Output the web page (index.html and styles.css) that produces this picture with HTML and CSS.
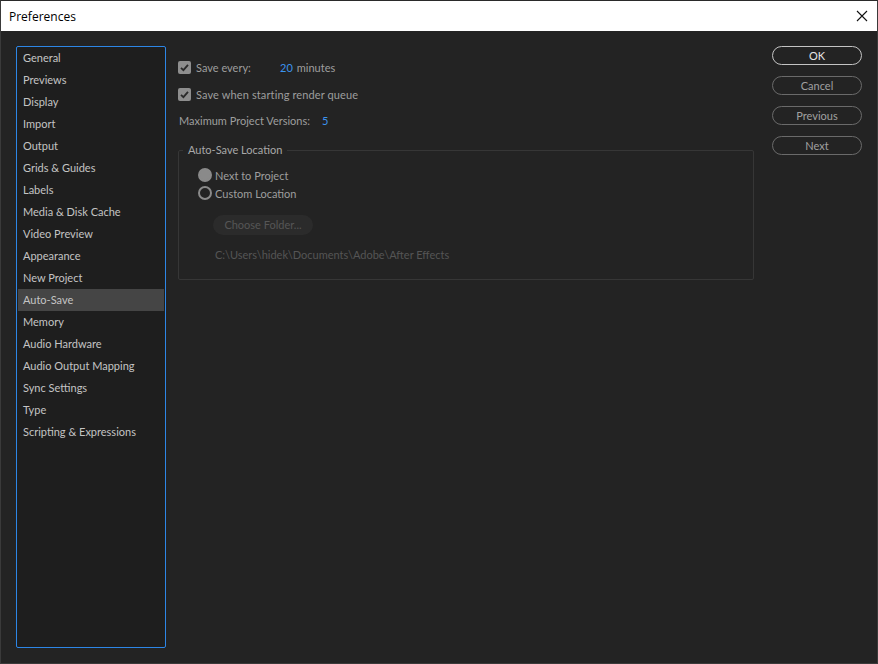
FILE: index.html
```html
<!DOCTYPE html>
<html>
<head>
<meta charset="utf-8">
<link rel="stylesheet" href="styles.css">
</head>
<body>
<div class="window">
  <div class="titlebar">
    <span class="title">Preferences</span>
    <svg class="close" width="12" height="12" viewBox="0 0 12 12"><path d="M1 1L11 11M11 1L1 11" stroke="#111" stroke-width="1.1" fill="none"/></svg>
  </div>
  <div class="content">
    <ul class="nav">
      <li>General</li>
      <li>Previews</li>
      <li>Display</li>
      <li>Import</li>
      <li>Output</li>
      <li>Grids &amp; Guides</li>
      <li>Labels</li>
      <li>Media &amp; Disk Cache</li>
      <li>Video Preview</li>
      <li>Appearance</li>
      <li>New Project</li>
      <li class="active">Auto-Save</li>
      <li>Memory</li>
      <li>Audio Hardware</li>
      <li>Audio Output Mapping</li>
      <li>Sync Settings</li>
      <li>Type</li>
      <li>Scripting &amp; Expressions</li>
    </ul>
    <div class="panel">
      <div class="row row1">
        <span class="check"><svg width="13" height="13" viewBox="0 0 13 13"><path d="M3 6.8L5.4 9.2L10 3.8" stroke="#2a2a2a" stroke-width="1.8" fill="none"/></svg></span>
        <span class="label w-save">Save every:</span>
        <span class="num">20</span>
        <span class="label">minutes</span>
      </div>
      <div class="row row2">
        <span class="check"><svg width="13" height="13" viewBox="0 0 13 13"><path d="M3 6.8L5.4 9.2L10 3.8" stroke="#2a2a2a" stroke-width="1.8" fill="none"/></svg></span>
        <span class="label wide">Save when starting render queue</span>
      </div>
      <div class="row row3">
        <span class="label">Maximum Project Versions:</span>
        <span class="num">5</span>
      </div>
      <fieldset class="group">
        <legend>Auto-Save Location</legend>
        <div class="radio-row first"><span class="radio on"></span><span class="label">Next to Project</span></div>
        <div class="radio-row"><span class="radio"></span><span class="label">Custom Location</span></div>
        <div class="folder-btn">Choose Folder...</div>
        <div class="path">C:\Users\hidek\Documents\Adobe\After Effects</div>
      </fieldset>
    </div>
    <div class="buttons">
      <div class="btn primary">OK</div>
      <div class="btn">Cancel</div>
      <div class="btn">Previous</div>
      <div class="btn">Next</div>
    </div>
  </div>
</div>
</body>
</html>
```
FILE: styles.css
```css
* { box-sizing: border-box; }
html, body { margin: 0; padding: 0; }
body {
  width: 878px;
  height: 664px;
  overflow: hidden;
  background: #232323;
  font-family: Lato, "Open Sans", sans-serif;
  font-size: 11px;
}
.window {
  width: 878px;
  height: 664px;
  border: 1px solid #3a3a3a;
  border-top-color: #2a2a2a;
  background: #232323;
  display: flex;
  flex-direction: column;
}
.titlebar {
  height: 30px;
  background: #ffffff;
  display: flex;
  align-items: center;
  justify-content: space-between;
  padding: 0 9px 0 8px;
  flex: none;
}
.title {
  font-family: "Open Sans", "Noto Sans", sans-serif;
  font-size: 12px;
  color: #000;
}
.content {
  flex: 1;
  display: flex;
  padding: 15px 15px 0 15px;
}
.nav {
  list-style: none;
  margin: 0;
  padding: 0 1px;
  width: 150px;
  height: 602px;
  border: 1px solid #2d86e6;
  border-radius: 2px;
  background: #1e1e1e;
  flex: none;
}
.nav li {
  height: 22px;
  line-height: 22px;
  padding-left: 5px;
  color: #c4c4c4;
  white-space: nowrap;
}
.nav li.active { background: #454545; }
.panel {
  width: 576px;
  margin-left: 12px;
  padding-top: 14px;
  flex: none;
}
.row {
  display: flex;
  align-items: center;
  height: 14px;
  color: #9e9e9e;
}
.row2 { margin-top: 13px; }
.row3 { margin-top: 12px; padding-left: 1px; }
.check {
  width: 13px;
  height: 13px;
  background: #8e8e8e;
  border-radius: 2px;
  margin-right: 5px;
  display: flex;
}
.w-save { width: 84px; }
.wide { letter-spacing: 0.12px; }
.num { color: #3b93ee; margin-right: 4px; }
.row3 .num { margin-left: 12px; }
.label { white-space: nowrap; }
.group {
  margin: 16px 0 0 0;
  padding: 6px 0 0 19px;
  height: 137px;
  border: 1px solid #363636;
  border-radius: 2px;
  min-width: 0;
}
.group legend {
  padding: 0 5px 0 5px;
  margin-left: -15px;
  color: #a8a8a8;
  line-height: 14px;
}
.radio-row {
  display: flex;
  align-items: center;
  height: 18px;
  color: #9e9e9e;
}
.radio-row.first { margin-top: 3px; }
.radio {
  width: 14px;
  height: 14px;
  border-radius: 50%;
  border: 2px solid #8a8a8a;
  margin-right: 3px;
}
.radio.on { background: #8a8a8a; }
.folder-btn {
  margin-top: 13px;
  margin-left: 15px;
  width: 100px;
  height: 20px;
  line-height: 20px;
  border-radius: 10px;
  background: #2b2b2b;
  color: #565656;
  text-align: center;
}
.path {
  margin-top: 13px;
  margin-left: 17px;
  color: #555555;
}
.buttons {
  margin-left: 18px;
  display: flex;
  flex-direction: column;
  gap: 11px;
}
.btn {
  width: 90px;
  height: 19px;
  line-height: 17px;
  border: 1px solid #6a6a6a;
  border-radius: 10px;
  color: #a0a0a0;
  text-align: center;
}
.btn.primary { border-color: #c4c4c4; color: #e4e4e4; }
```
